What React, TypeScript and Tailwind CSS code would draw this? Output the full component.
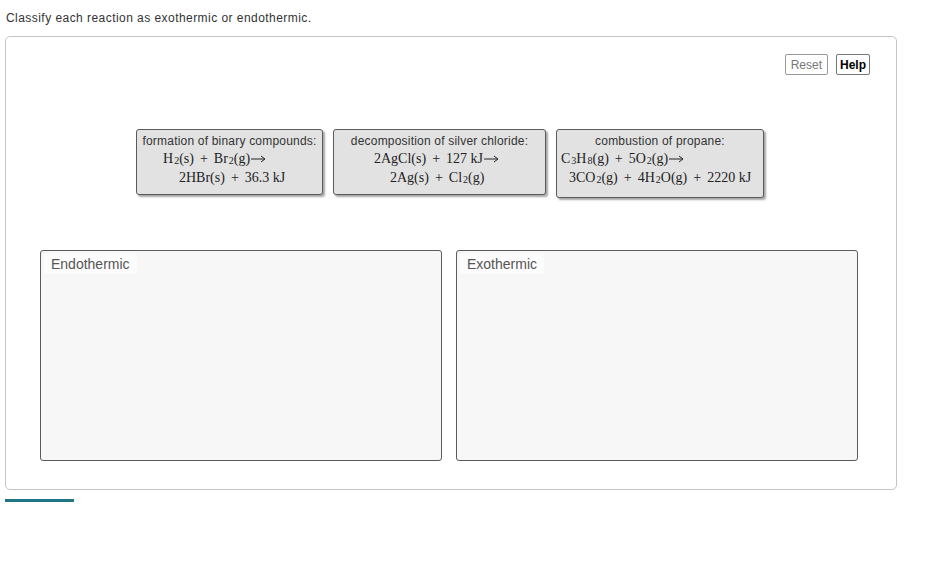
import React from 'react';

type Line = { indent: string; body: React.ReactNode };
type Reaction = { id: string; label: string; width: string; height: string; lines: Line[] };

const Sub: React.FC<{ children: React.ReactNode }> = ({ children }) => (
  <sub className="text-[10px] leading-none relative top-[1px] align-baseline ml-[1px]">{children}</sub>
);

const Plus = () => <span className="mx-[6px]">+</span>;

// thin reaction arrow
const Arrow = () => (
  <svg width="15" height="8" viewBox="0 0 15 8" className="inline-block align-middle ml-[1px] relative top-[-1px]">
    <path d="M0 4H13.5M10 1L14 4L10 7" fill="none" stroke="#222" strokeWidth="1" />
  </svg>
);

const REACTIONS: Reaction[] = [
  {
    id: 'binary',
    label: 'formation of binary compounds:',
    width: 'w-[187px]',
    height: 'h-[66px]',
    lines: [
      { indent: 'ml-[26px]', body: <>H<Sub>2</Sub>(s)<Plus />Br<Sub>2</Sub>(g)<Arrow /></> },
      { indent: 'ml-[42px]', body: <>2HBr(s)<Plus />36.3 kJ</> },
    ],
  },
  {
    id: 'silver',
    label: 'decomposition of silver chloride:',
    width: 'w-[213px]',
    height: 'h-[66px]',
    lines: [
      { indent: 'ml-[40px]', body: <>2AgCl(s)<Plus />127 kJ<Arrow /></> },
      { indent: 'ml-[56px]', body: <>2Ag(s)<Plus />Cl<Sub>2</Sub>(g)</> },
    ],
  },
  {
    id: 'propane',
    label: 'combustion of propane:',
    width: 'w-[208px]',
    height: 'h-[69px]',
    lines: [
      { indent: 'ml-[4px]', body: <>C<Sub>3</Sub>H<Sub>8</Sub>(g)<Plus />5O<Sub>2</Sub>(g)<Arrow /></> },
      { indent: 'ml-[12px]', body: <>3CO<Sub>2</Sub>(g)<Plus />4H<Sub>2</Sub>O(g)<Plus />2220 kJ</> },
    ],
  },
];

const ReactionCard: React.FC<{ r: Reaction }> = ({ r }) => (
  <div
    className={`${r.width} ${r.height} bg-[#e2e2e2] border border-[#5a5a5a] rounded-[3px] shadow-[2px_2px_2px_rgba(0,0,0,0.35)] pt-[4px] flex flex-col`}
  >
    <div className="text-center text-[12px] leading-[14px] tracking-[0.2px] text-[#333] font-['Liberation_Sans',Arial,sans-serif]">
      {r.label}
    </div>
    {r.lines.map((l, i) => (
      <div
        key={i}
        className={`${l.indent} mt-[2px] text-[14px] leading-[17px] text-[#222] whitespace-nowrap font-['Liberation_Serif','Times_New_Roman',serif]`}
      >
        {l.body}
      </div>
    ))}
  </div>
);

const DropZone: React.FC<{ title: string }> = ({ title }) => (
  <div className="w-[402px] h-[211px] bg-[#f7f7f7] border-[1.5px] border-[#5b5b5b] rounded-[3px] px-[3px] pt-[1px]">
    <span className="inline-block bg-[#fcfcfc] px-[7px] py-[2px] text-[14px] leading-[16px] text-[#555]">
      {title}
    </span>
  </div>
);

const App: React.FC = () => {
  return (
    <div className="w-[929px] h-[577px] bg-white font-['Liberation_Sans',Arial,sans-serif] overflow-hidden">
      <p className="pl-[6px] pt-[10px] text-[12px] leading-[16px] tracking-[0.45px] text-[#333]">
        Classify each reaction as exothermic or endothermic.
      </p>

      <div className="ml-[5px] mt-[10px] w-[892px] h-[454px] border border-[#c4c4c4] rounded-[5px] flex flex-col">
        <div className="flex justify-end gap-[8px] pr-[26px] pt-[17px]">
          <button className="h-[21px] px-[5px] border border-[#999] rounded-[2px] bg-white text-[12px] text-[#777]">
            Reset
          </button>
          <button className="h-[21px] px-[3px] border border-[#777] rounded-[2px] bg-white text-[12px] font-bold text-black">
            Help
          </button>
        </div>

        <div className="flex gap-[10px] pl-[130px] mt-[54px] items-start">
          {REACTIONS.map((r) => (
            <ReactionCard key={r.id} r={r} />
          ))}
        </div>

        <div className="flex gap-[14px] pl-[34px] mt-[52px]">
          <DropZone title="Endothermic" />
          <DropZone title="Exothermic" />
        </div>
      </div>

      <div className="ml-[5px] mt-[9px] w-[69px] h-[3px] bg-[#1f7585]" />
    </div>
  );
};

export default App;
